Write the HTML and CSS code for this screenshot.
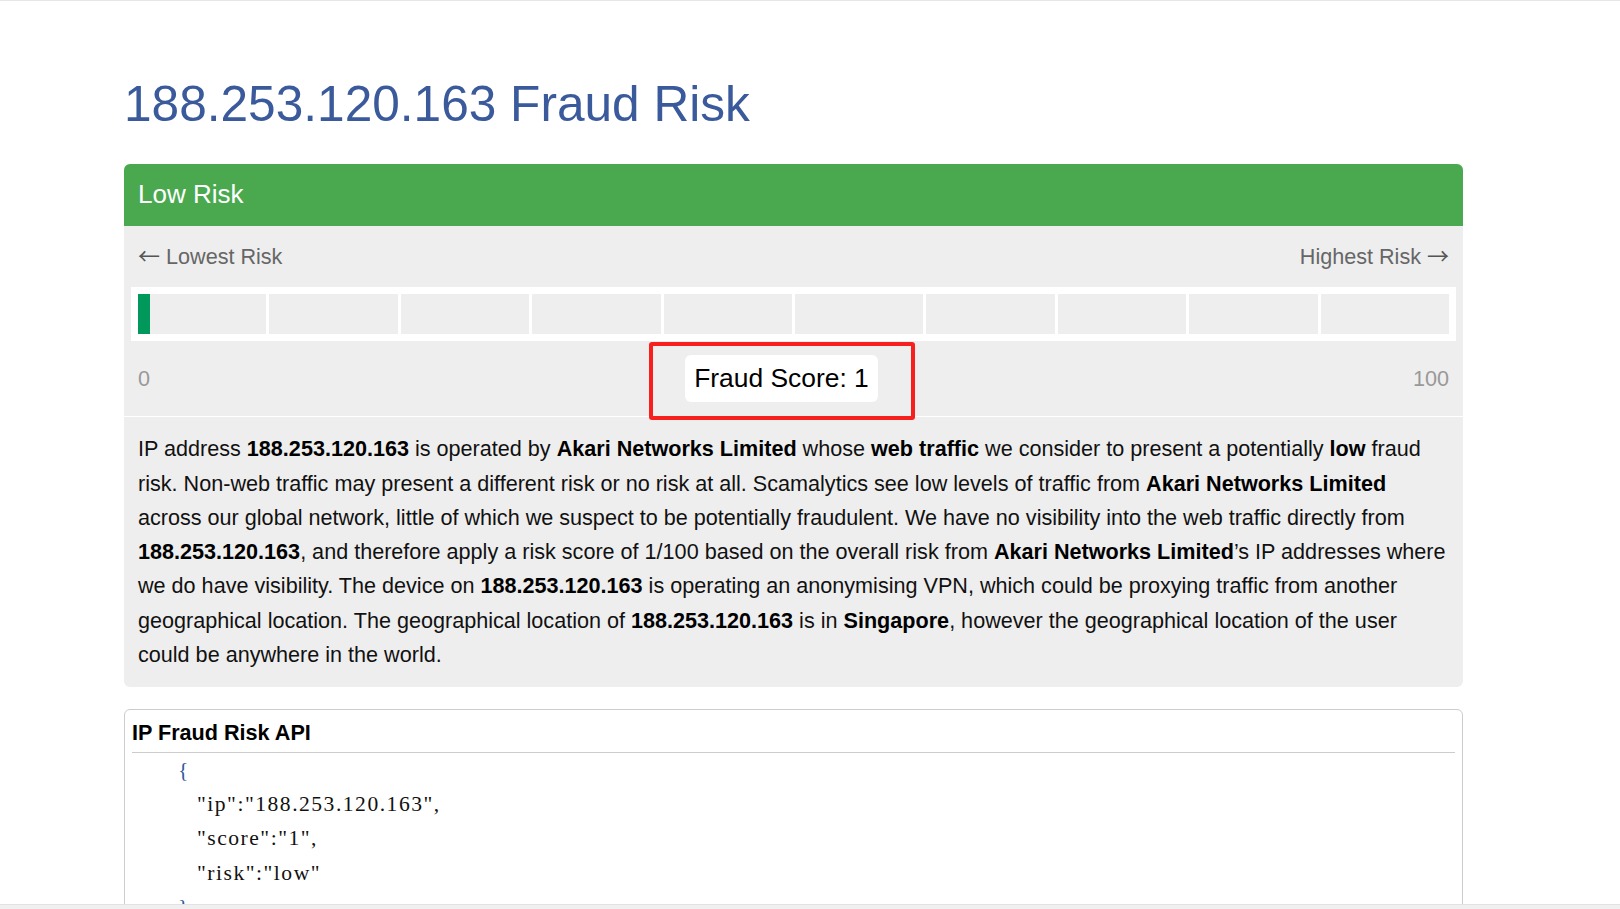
FILE: index.html
```
<!DOCTYPE html>
<html lang="en">
<head>
    <meta charset="UTF-8">
    <meta name="viewport" content="width=device-width, initial-scale=1.0">
    <title>188.253.120.163 Fraud Risk</title>
    <link rel="stylesheet" href="styles.css">
</head>
<body>
    <div class="page">
        <h1 class="title">188.253.120.163 Fraud Risk</h1>

        <div class="risk-card">
            <div class="risk-header">Low Risk</div>

            <div class="gauge">
                <div class="gauge-labels">
                    <span><span class="arrow">&larr;</span> Lowest Risk</span>
                    <span>Highest Risk <span class="arrow">&rarr;</span></span>
                </div>
                <div class="gauge-track">
                    <div class="segment"><div class="fill"></div></div>
                    <div class="segment"></div>
                    <div class="segment"></div>
                    <div class="segment"></div>
                    <div class="segment"></div>
                    <div class="segment"></div>
                    <div class="segment"></div>
                    <div class="segment"></div>
                    <div class="segment"></div>
                    <div class="segment"></div>
                </div>
                <div class="gauge-scale">
                    <span class="scale-end">0</span>
                    <div class="scale-center">
                        <div class="score-box">
                            Fraud Score: 1
                            <div class="highlight"></div>
                        </div>
                    </div>
                    <span class="scale-end">100</span>
                </div>
            </div>

            <div class="risk-text">
                IP address <b>188.253.120.163</b> is operated by <b>Akari Networks Limited</b> whose <b>web traffic</b> we consider to present a potentially <b>low</b> fraud risk. Non-web traffic may present a different risk or no risk at all. Scamalytics see low levels of traffic from <b>Akari Networks Limited</b> across our global network, little of which we suspect to be potentially fraudulent. We have no visibility into the web traffic directly from <b>188.253.120.163</b>, and therefore apply a risk score of 1/100 based on the overall risk from <b>Akari Networks Limited</b>’s IP addresses where we do have visibility. The device on <b>188.253.120.163</b> is operating an anonymising VPN, which could be proxying traffic from another geographical location. The geographical location of <b>188.253.120.163</b> is in <b>Singapore</b>, however the geographical location of the user could be anywhere in the world.
            </div>
        </div>

        <div class="api-card">
            <div class="api-title">IP Fraud Risk API</div>
            <div class="json">
                <div class="brace">{</div>
                <div class="json-body">
                    <div>"ip":"188.253.120.163",</div>
                    <div>"score":"1",</div>
                    <div>"risk":"low"</div>
                </div>
                <div class="brace">}</div>
            </div>
        </div>
    </div>
    <div class="bottom-bar"></div>
</body>
</html>
```
FILE: styles.css
```
* {
    margin: 0;
    padding: 0;
    box-sizing: border-box;
}

html {
    overflow: hidden;
}

body {
    font-family: "Liberation Sans", Arial, sans-serif;
    font-size: 21.6px;
    line-height: 34.3px;
    color: #111;
    background-color: #fff;
    border-top: 1px solid #e6e6e6;
}

.page {
    width: 1463px;
    padding-left: 124px;
}

.title {
    font-size: 49.6px;
    font-weight: normal;
    line-height: 55px;
    color: #3a5a9b;
    margin-top: 76px;
    margin-bottom: 32px;
}

.risk-card {
    background-color: #eee;
    border-radius: 6px;
    overflow: hidden;
}

.risk-header {
    background-color: #4aa94f;
    color: #fff;
    font-size: 26px;
    height: 62px;
    line-height: 60px;
    padding: 0 14px 2px;
}

.gauge {
    padding: 14px 7px 14px;
    border-bottom: 1px solid #fff;
}

.gauge-labels {
    display: flex;
    justify-content: space-between;
    padding: 0 7px;
    color: #666;
}

.arrow {
    font-family: "Noto Sans CJK SC", "DejaVu Sans", sans-serif;
    font-size: 22px;
    line-height: 0;
    color: #555;
}

.gauge-track {
    margin-top: 13px;
    background-color: #fff;
    padding: 7px;
    display: grid;
    grid-template-columns: repeat(10, 1fr);
    gap: 3px;
}

.segment {
    height: 40px;
    background-color: #eee;
}

.fill {
    width: 12px;
    height: 100%;
    background-color: #00995b;
}

.gauge-scale {
    margin-top: 14px;
    display: flex;
    align-items: center;
    padding: 0 7px;
}

.scale-end {
    color: #999;
}

.scale-center {
    flex: 1;
    display: flex;
    justify-content: center;
}

.score-box {
    position: relative;
    background-color: #fff;
    border-radius: 6px;
    height: 47px;
    line-height: 47px;
    padding: 0 9px;
    font-size: 26.4px;
    color: #000;
}

.highlight {
    position: absolute;
    left: -36px;
    top: -13px;
    width: 266px;
    height: 78px;
    border: 4px solid #f7201f;
    border-radius: 3px;
}

.risk-text {
    padding: 15px 14px 15px;
}

.risk-text b {
    color: #000;
}

.api-card {
    margin-top: 22px;
    border: 1px solid #ccc;
    border-radius: 6px;
    padding: 6px 7px 10px;
}

.api-title {
    font-weight: bold;
    color: #000;
    border-bottom: 1px solid #ccc;
    padding-bottom: 1px;
}

.json {
    font-family: "Liberation Serif", "Times New Roman", serif;
    letter-spacing: 1.5px;
    color: #111;
    padding-left: 46px;
}

.brace {
    color: #2f5a9e;
}

.json-body {
    padding-left: 19px;
}

.bottom-bar {
    position: fixed;
    left: 0;
    right: 0;
    bottom: 0;
    height: 5px;
    background-color: #f0f0f0;
    border-top: 1px solid #e2e2e2;
}
```
